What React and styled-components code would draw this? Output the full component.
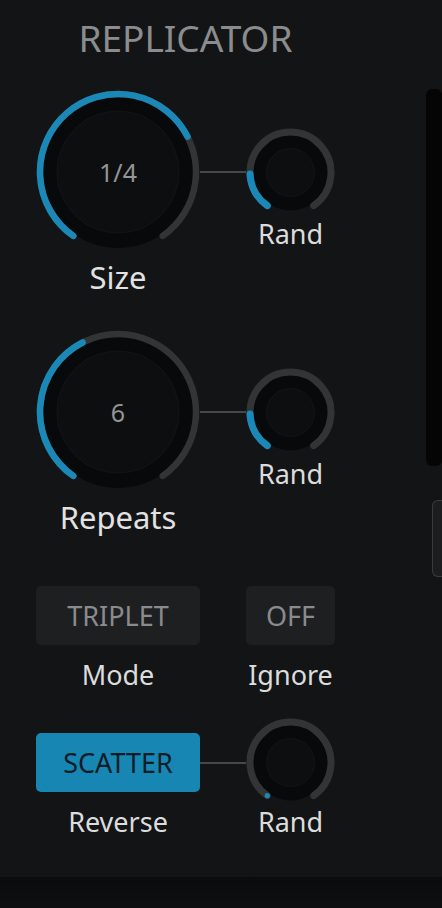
import React from 'react';
import styled, { createGlobalStyle } from 'styled-components';

const GlobalStyle = createGlobalStyle`
  html, body {
    margin: 0;
    padding: 0;
    background: #131416;
  }
  body {
    font-family: "Noto Sans", "Open Sans", sans-serif;
  }
`;

const BLUE = '#1a89b7';

const Screen = styled.div`
  width: 442px;
  height: 908px;
  overflow: hidden;
  display: flex;
  flex-direction: column;
  background: #131416;
`;

const Main = styled.div`
  flex: 1;
  display: flex;
`;

const Panel = styled.section`
  width: 390px;
  flex-shrink: 0;
  padding: 15px 0 0 36px;
  box-sizing: border-box;
`;

const Title = styled.h1`
  width: 299px;
  margin: 0;
  font-size: 37px;
  line-height: 46px;
  font-weight: 400;
  color: #8b8c8e;
  text-align: center;
`;

const KnobRow = styled.div`
  display: grid;
  grid-template-columns: 164px 46px 89px;
  align-items: start;
  margin-top: ${p => p.$gap}px;
`;

const Cell = styled.div`
  display: flex;
  flex-direction: column;
  align-items: center;
  padding-top: ${p => p.$offset || 0}px;
`;

const Connector = styled.div`
  height: 2px;
  background: #47484a;
  margin-top: ${p => p.$top}px;
`;

const BigLabel = styled.div`
  margin-top: 4px;
  font-size: 31px;
  line-height: 38px;
  color: #e2e2e2;
`;

const Label = styled.div`
  margin-top: ${p => p.$top || 0}px;
  font-size: 27px;
  line-height: 32px;
  color: #dcdcdc;
  white-space: nowrap;
`;

const ButtonRow = styled.div`
  display: grid;
  grid-template-columns: 164px 46px 89px;
  grid-template-rows: 59px auto;
  align-items: center;
  margin-top: ${p => p.$gap}px;
`;

const LabelCell = styled.div`
  grid-column: ${p => p.$col};
  justify-self: center;
`;

const Toggle = styled.button`
  width: 100%;
  height: 59px;
  border: none;
  border-radius: 5px;
  padding: 0;
  font-family: inherit;
  font-size: 27px;
  color: ${p => (p.$on ? '#0a1c26' : '#8a8b8d')};
  background: ${p => (p.$on ? '#1786b3' : '#1e1f21')};
  grid-column: ${p => p.$col};
`;

const KnobWrap = styled.div`
  display: grid;
  place-items: center;
  width: ${p => p.$size}px;
  height: ${p => p.$size}px;
  grid-column: ${p => p.$col || 'auto'};
  justify-self: center;

  & > * {
    grid-area: 1 / 1;
  }
`;

const KnobValue = styled.span`
  font-size: 25px;
  color: #949597;
`;

const Side = styled.aside`
  flex: 1;
  display: flex;
  flex-direction: column;
  padding-left: 36px;
`;

const Strip = styled.div`
  margin-top: 89px;
  height: 377px;
  border-radius: 6px;
  background: #050506;
`;

const SideBox = styled.div`
  margin: 34px 0 0 6px;
  height: 75px;
  border: 1.5px solid #3a3b3d;
  border-right: none;
  border-radius: 6px 0 0 6px;
  background: #1c1d1f;
`;

const Footer = styled.div`
  height: 31px;
  background: linear-gradient(#0a0b0d, #0e0f11);
`;

const polar = (c, r, a) => {
  const rad = (a * Math.PI) / 180;
  return [c + r * Math.sin(rad), c - r * Math.cos(rad)];
};

const arc = (c, r, a0, a1) => {
  const [x0, y0] = polar(c, r, a0);
  const [x1, y1] = polar(c, r, a1);
  const large = a1 - a0 > 180 ? 1 : 0;
  return `M ${x0} ${y0} A ${r} ${r} 0 ${large} 1 ${x1} ${y1}`;
};

const START = -145;
const END = 145;

function Knob({ size, ringR, ringW, bodyR, faceR, value, col, children }) {
  const c = size / 2;
  const [dx, dy] = polar(c, ringR, START);
  return (
    <KnobWrap $size={size} $col={col}>
      <svg width={size} height={size} viewBox={`0 0 ${size} ${size}`}>
        <circle cx={c} cy={c} r={bodyR} fill="#08090a" />
        <path d={arc(c, ringR, START, END)} stroke="#333436" strokeWidth={ringW} fill="none" strokeLinecap="round" />
        {value > START ? (
          <path d={arc(c, ringR, START, value)} stroke={BLUE} strokeWidth={ringW} fill="none" strokeLinecap="round" />
        ) : (
          <circle cx={dx} cy={dy} r={2.6} fill={BLUE} />
        )}
        <circle cx={c} cy={c} r={faceR} fill="#0d0e10" stroke="#141517" strokeWidth="1" />
      </svg>
      {children}
    </KnobWrap>
  );
}

const BigKnob = ({ value, text }) => (
  <Knob size={164} ringR={78} ringW={6.5} bodyR={76} faceR={61} value={value}>
    <KnobValue>{text}</KnobValue>
  </Knob>
);

const RandKnob = ({ value, col }) => (
  <Knob size={89} ringR={40.5} ringW={7} bodyR={38} faceR={24} value={value} col={col} />
);

export default function App() {
  return (
    <>
      <GlobalStyle />
      <Screen>
        <Main>
          <Panel>
            <Title>REPLICATOR</Title>

            <KnobRow $gap={29}>
              <Cell>
                <BigKnob value={63} text="1/4" />
                <BigLabel>Size</BigLabel>
              </Cell>
              <Connector $top={81} />
              <Cell $offset={37.5}>
                <RandKnob value={-92} />
                <Label $top={1}>Rand</Label>
              </Cell>
            </KnobRow>

            <KnobRow $gap={34}>
              <Cell>
                <BigKnob value={-27} text="6" />
                <BigLabel>Repeats</BigLabel>
              </Cell>
              <Connector $top={81} />
              <Cell $offset={37.5}>
                <RandKnob value={-92} />
                <Label $top={1}>Rand</Label>
              </Cell>
            </KnobRow>

            <ButtonRow $gap={50}>
              <Toggle $col={1}>TRIPLET</Toggle>
              <Toggle $col={3}>OFF</Toggle>
              <LabelCell $col={1}><Label $top={14}>Mode</Label></LabelCell>
              <LabelCell $col={3}><Label $top={14}>Ignore</Label></LabelCell>
            </ButtonRow>

            <ButtonRow $gap={42}>
              <Toggle $col={1} $on>SCATTER</Toggle>
              <Connector $top={0} />
              <RandKnob value={START} col={3} />
              <LabelCell $col={1}><Label $top={14}>Reverse</Label></LabelCell>
              <LabelCell $col={3}><Label $top={14}>Rand</Label></LabelCell>
            </ButtonRow>
          </Panel>
          <Side>
            <Strip />
            <SideBox />
          </Side>
        </Main>
        <Footer />
      </Screen>
    </>
  );
}
